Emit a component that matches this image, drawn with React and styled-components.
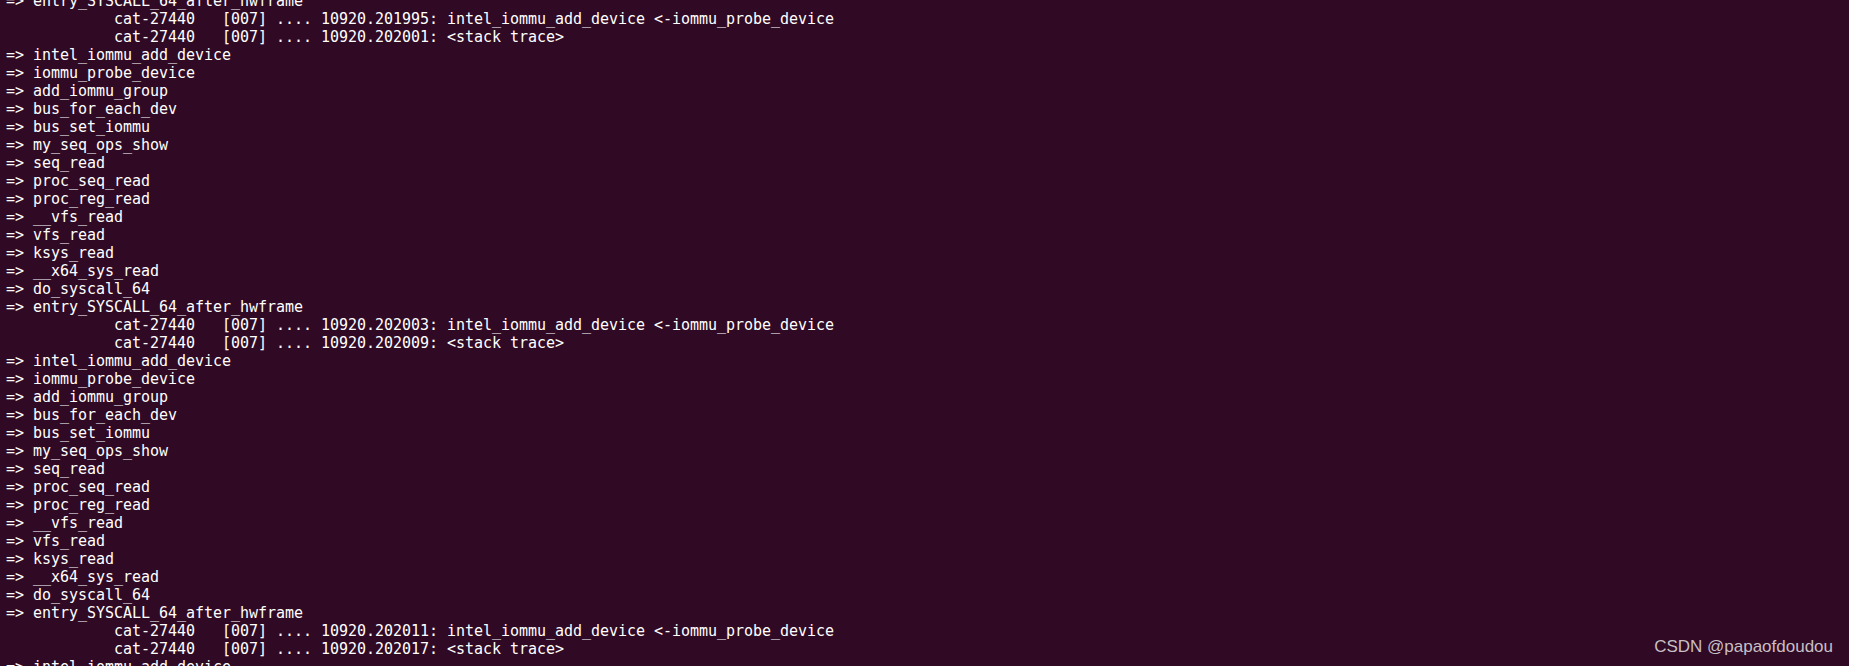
import React from "react";
import styled, { createGlobalStyle } from "styled-components";

const Global = createGlobalStyle`
  html, body { margin: 0; padding: 0; background: #300a24; }
  #root { height: 666px; overflow: hidden; }
`;

const Terminal = styled.div`
  position: relative;
  height: 666px;
  overflow: hidden;
  background: #300a24;
`;

const Output = styled.div`
  margin-top: -8px;
  padding-left: 6px;
  font-family: "DejaVu Sans Mono", "Liberation Mono", monospace;
  font-size: 15px;
  letter-spacing: -0.03px;
  line-height: 18px;
  color: #ffffff;
`;

const Line = styled.div`
  white-space: pre;
  height: 18px;
`;

const Watermark = styled.div`
  position: absolute;
  right: 16px;
  bottom: 9px;
  font-family: "Liberation Sans", Arial, sans-serif;
  font-size: 17px;
  line-height: 20px;
  color: #c8bfc5;
`;

const stack = [
  "intel_iommu_add_device",
  "iommu_probe_device",
  "add_iommu_group",
  "bus_for_each_dev",
  "bus_set_iommu",
  "my_seq_ops_show",
  "seq_read",
  "proc_seq_read",
  "proc_reg_read",
  "__vfs_read",
  "vfs_read",
  "ksys_read",
  "__x64_sys_read",
  "do_syscall_64",
  "entry_SYSCALL_64_after_hwframe",
];

const pairs = [
  ["201995", "202001"],
  ["202003", "202009"],
  ["202011", "202017"],
];

const lines = ["=> entry_SYSCALL_64_after_hwframe"];
pairs.forEach(([a, b]) => {
  lines.push(
    `            cat-27440   [007] .... 10920.${a}: intel_iommu_add_device <-iommu_probe_device`
  );
  lines.push(`            cat-27440   [007] .... 10920.${b}: <stack trace>`);
  stack.forEach((s) => lines.push(`=> ${s}`));
});

export default function App() {
  return (
    <Terminal>
      <Global />
      <Output>
        {lines.map((l, i) => (
          <Line key={i}>{l}</Line>
        ))}
      </Output>
      <Watermark>CSDN @papaofdoudou</Watermark>
    </Terminal>
  );
}
